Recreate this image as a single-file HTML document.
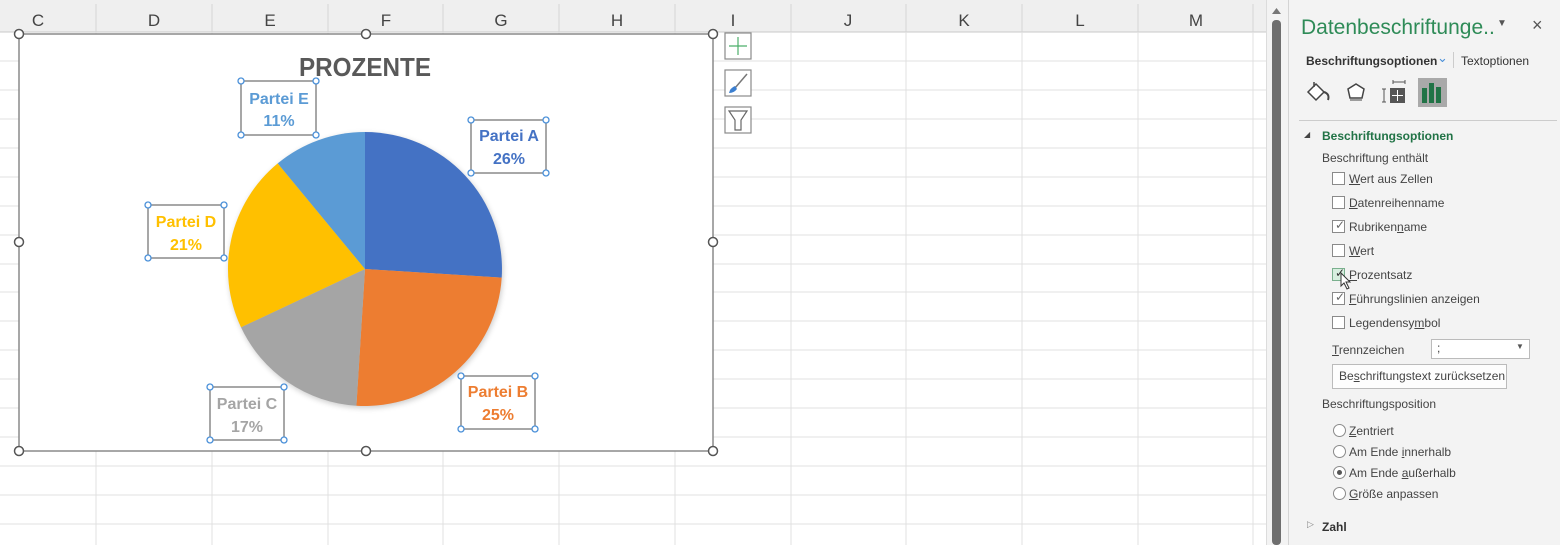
<!DOCTYPE html>
<html><head><meta charset="utf-8"><style>
body{margin:0;width:1560px;height:545px;overflow:hidden;background:#fff;font-family:"Liberation Sans",sans-serif;position:relative}
.panel{position:absolute;left:1288px;top:0;width:272px;height:545px;background:#f3f3f3;border-left:1px solid #d4d4d4;color:#444;font-size:12px}
.panel .t{position:absolute;white-space:nowrap}
.cb{position:absolute;width:11px;height:11px;border:1px solid #8a8a8a;background:#fff}
.rb{position:absolute;width:11px;height:11px;border:1px solid #8a8a8a;border-radius:50%;background:#fff}
</style></head><body>
<svg width="1288" height="545" style="position:absolute;left:0;top:0" font-family="Liberation Sans, sans-serif">
<rect x="0" y="0" width="1266" height="32" fill="#efefef"/>
<line x1="0" y1="32" x2="1266" y2="32" stroke="#c8c8c8"/>
<g stroke="#d4d4d4">
<line x1="96" y1="4" x2="96" y2="32"/><line x1="212" y1="4" x2="212" y2="32"/><line x1="328" y1="4" x2="328" y2="32"/><line x1="443" y1="4" x2="443" y2="32"/><line x1="559" y1="4" x2="559" y2="32"/><line x1="675" y1="4" x2="675" y2="32"/><line x1="791" y1="4" x2="791" y2="32"/><line x1="906" y1="4" x2="906" y2="32"/><line x1="1022" y1="4" x2="1022" y2="32"/><line x1="1138" y1="4" x2="1138" y2="32"/><line x1="1253" y1="4" x2="1253" y2="32"/>
</g>
<g stroke="#e1e1e1">
<line x1="96" y1="32" x2="96" y2="545"/><line x1="212" y1="32" x2="212" y2="545"/><line x1="328" y1="32" x2="328" y2="545"/><line x1="443" y1="32" x2="443" y2="545"/><line x1="559" y1="32" x2="559" y2="545"/><line x1="675" y1="32" x2="675" y2="545"/><line x1="791" y1="32" x2="791" y2="545"/><line x1="906" y1="32" x2="906" y2="545"/><line x1="1022" y1="32" x2="1022" y2="545"/><line x1="1138" y1="32" x2="1138" y2="545"/><line x1="1253" y1="32" x2="1253" y2="545"/>
<line x1="0" y1="61" x2="1266" y2="61"/><line x1="0" y1="90" x2="1266" y2="90"/><line x1="0" y1="119" x2="1266" y2="119"/><line x1="0" y1="148" x2="1266" y2="148"/><line x1="0" y1="177" x2="1266" y2="177"/><line x1="0" y1="206" x2="1266" y2="206"/><line x1="0" y1="235" x2="1266" y2="235"/><line x1="0" y1="264" x2="1266" y2="264"/><line x1="0" y1="292" x2="1266" y2="292"/><line x1="0" y1="321" x2="1266" y2="321"/><line x1="0" y1="350" x2="1266" y2="350"/><line x1="0" y1="379" x2="1266" y2="379"/><line x1="0" y1="408" x2="1266" y2="408"/><line x1="0" y1="437" x2="1266" y2="437"/><line x1="0" y1="466" x2="1266" y2="466"/><line x1="0" y1="495" x2="1266" y2="495"/><line x1="0" y1="524" x2="1266" y2="524"/>
</g>
<g font-size="17" fill="#444" text-anchor="middle">
<text x="38" y="26">C</text><text x="154" y="26">D</text><text x="270" y="26">E</text><text x="386" y="26">F</text><text x="501" y="26">G</text><text x="617" y="26">H</text><text x="733" y="26">I</text><text x="848" y="26">J</text><text x="964" y="26">K</text><text x="1080" y="26">L</text><text x="1196" y="26">M</text>
</g>
<rect x="1266" y="0" width="22" height="545" fill="#f3f3f3"/>
<line x1="1266.5" y1="0" x2="1266.5" y2="545" stroke="#dcdcdc"/>
<rect x="1272" y="20" width="9" height="525" rx="4" fill="#6e6e6e"/>
<path d="M1272 14 L1276.5 8 L1281 14Z" fill="#777"/>
<rect x="19" y="34" width="694" height="417" fill="#fff" stroke="#8a8a8a" stroke-width="1.5"/>
<text x="365" y="76" font-size="26" font-weight="bold" fill="#595959" text-anchor="middle" textLength="132" lengthAdjust="spacingAndGlyphs">PROZENTE</text>
<defs><filter id="sh" x="-20%" y="-20%" width="140%" height="140%"><feGaussianBlur stdDeviation="3"/></filter></defs>
<circle cx="366" cy="271" r="137" fill="#000" opacity="0.2" filter="url(#sh)"/>
<path d="M365 269 L365 132 A137 137 0 0 1 501.7 277.6Z" fill="#4472c4"/>
<path d="M365 269 L501.7 277.6 A137 137 0 0 1 356.4 405.7Z" fill="#ed7d31"/>
<path d="M365 269 L356.4 405.7 A137 137 0 0 1 241 327.3Z" fill="#a5a5a5"/>
<path d="M365 269 L241 327.3 A137 137 0 0 1 277.7 163.4Z" fill="#ffc000"/>
<path d="M365 269 L277.7 163.4 A137 137 0 0 1 365 132Z" fill="#5b9bd5"/>
<g fill="#fff" stroke="#8a8a8a" stroke-width="1.5">
<rect x="241" y="81" width="75" height="54"/><rect x="471" y="120" width="75" height="53"/><rect x="148" y="205" width="76" height="53"/><rect x="461" y="376" width="74" height="53"/><rect x="210" y="387" width="74" height="53"/>
</g>
<g fill="#fff" stroke="#4a90d9" stroke-width="1.3">
<circle cx="241" cy="81" r="3"/><circle cx="316" cy="81" r="3"/><circle cx="241" cy="135" r="3"/><circle cx="316" cy="135" r="3"/>
<circle cx="471" cy="120" r="3"/><circle cx="546" cy="120" r="3"/><circle cx="471" cy="173" r="3"/><circle cx="546" cy="173" r="3"/>
<circle cx="148" cy="205" r="3"/><circle cx="224" cy="205" r="3"/><circle cx="148" cy="258" r="3"/><circle cx="224" cy="258" r="3"/>
<circle cx="461" cy="376" r="3"/><circle cx="535" cy="376" r="3"/><circle cx="461" cy="429" r="3"/><circle cx="535" cy="429" r="3"/>
<circle cx="210" cy="387" r="3"/><circle cx="284" cy="387" r="3"/><circle cx="210" cy="440" r="3"/><circle cx="284" cy="440" r="3"/>
</g>
<g font-size="16" font-weight="bold" text-anchor="middle">
<text x="279" y="104" fill="#5b9bd5">Partei E</text><text x="279" y="126" fill="#5b9bd5">11%</text>
<text x="509" y="141" fill="#4472c4">Partei A</text><text x="509" y="164" fill="#4472c4">26%</text>
<text x="186" y="227" fill="#ffc000">Partei D</text><text x="186" y="250" fill="#ffc000">21%</text>
<text x="498" y="397" fill="#ed7d31">Partei B</text><text x="498" y="420" fill="#ed7d31">25%</text>
<text x="247" y="409" fill="#a5a5a5">Partei C</text><text x="247" y="432" fill="#a5a5a5">17%</text>
</g>
<g fill="#fff" stroke="#555" stroke-width="1.5">
<circle cx="19" cy="34" r="4.5"/><circle cx="366" cy="34" r="4.5"/><circle cx="713" cy="34" r="4.5"/><circle cx="19" cy="242" r="4.5"/><circle cx="713" cy="242" r="4.5"/><circle cx="19" cy="451" r="4.5"/><circle cx="366" cy="451" r="4.5"/><circle cx="713" cy="451" r="4.5"/>
</g>
<g fill="#fff" stroke="#8a8a8a" stroke-width="1.2">
<rect x="725" y="33" width="26" height="26"/><rect x="725" y="70" width="26" height="26"/><rect x="725" y="107" width="26" height="26"/>
</g>
<path d="M738 37 V55 M729 46 H747" stroke="#4caf6a" stroke-width="1.2"/>
<path d="M747 74 L735 88" stroke="#777" stroke-width="1.5"/>
<path d="M735 86 Q730 88 729 93 Q734 93 737 89Z" fill="#3b7fd0"/>
<path d="M729 111 H747 L741 120 V130 H735 V120Z" fill="none" stroke="#666" stroke-width="1.2"/>
</svg>
<div class="panel">
<div class="t" style="left:12px;top:16px;font-size:21px;color:#2e8b57">Datenbeschriftunge..</div>
<div class="t" style="left:208px;top:18px;font-size:10px;color:#555">▼</div>
<div class="t" style="left:243px;top:15px;font-size:18px;color:#555">×</div>
<div class="t" style="left:17px;top:54px;font-weight:bold;font-size:12px;color:#333">Beschriftungsoptionen</div>
<div class="t" style="left:148px;top:50px;font-size:13px;color:#4a90d9">⌄</div>
<div style="position:absolute;left:164px;top:52px;width:1px;height:16px;background:#ccc"></div>
<div class="t" style="left:172px;top:54px;color:#333">Textoptionen</div>
<svg style="position:absolute;left:15px;top:78px" width="150" height="32">
<path d="M4 14 L12 6 L20 14 L12 22Z" fill="#fff" stroke="#444" stroke-width="1.5"/><path d="M10 4 V9" stroke="#444" stroke-width="1.5"/><path d="M20 14 Q26 16 24 22" stroke="#444" stroke-width="2" fill="none"/>
<path d="M52 6 L60 11 L58 20 L46 20 L44 11Z" fill="#fff" stroke="#444" stroke-width="1.5"/><path d="M46 22 H58" stroke="#444"/>
<path d="M89 4 H101 M89 2 V6 M101 2 V6 M80 11 V24 M78 11 H82 M78 24 H82" stroke="#555"/><rect x="86" y="10" width="15" height="15" fill="#555"/><path d="M93.5 12 V23 M88 17.5 H99" stroke="#fff"/>
<rect x="114" y="0" width="29" height="29" fill="#a9a9a9"/><rect x="118" y="10" width="5" height="15" fill="#217346"/><rect x="125" y="5" width="5" height="20" fill="#217346"/><rect x="132" y="9" width="5" height="16" fill="#217346"/>
</svg>
<div style="position:absolute;left:10px;top:120px;width:258px;height:1px;background:#ccc"></div>
<div class="t" style="left:15px;top:130px;font-size:8px;color:#444">◢</div>
<div class="t" style="left:33px;top:129px;font-weight:bold;color:#217346">Beschriftungsoptionen</div>
<div class="t" style="left:33px;top:151px">Beschriftung enthält</div>
<div class="cb" style="left:43px;top:172px"></div><div class="t" style="left:60px;top:172px"><u>W</u>ert aus Zellen</div>
<div class="cb" style="left:43px;top:196px"></div><div class="t" style="left:60px;top:196px"><u>D</u>atenreihenname</div>
<div class="cb" style="left:43px;top:220px"></div><div class="t" style="left:46px;top:218px;color:#666">✓</div><div class="t" style="left:60px;top:220px">Rubriken<u>n</u>ame</div>
<div class="cb" style="left:43px;top:244px"></div><div class="t" style="left:60px;top:244px"><u>W</u>ert</div>
<div class="cb" style="left:43px;top:268px;background:#d7eedf;border-color:#7ab08e"></div><div class="t" style="left:46px;top:266px;color:#333">✓</div><div class="t" style="left:60px;top:268px"><u>P</u>rozentsatz</div>
<svg style="position:absolute;left:51px;top:272px" width="12" height="18"><path d="M1 1 V14 L4 11 L7 17 L9 16 L6 10 L10 10Z" fill="#fff" stroke="#333"/></svg>
<div class="cb" style="left:43px;top:292px"></div><div class="t" style="left:46px;top:290px;color:#666">✓</div><div class="t" style="left:60px;top:292px"><u>F</u>ührungslinien anzeigen</div>
<div class="cb" style="left:43px;top:316px"></div><div class="t" style="left:60px;top:316px">Legendensy<u>m</u>bol</div>
<div class="t" style="left:43px;top:343px"><u>T</u>rennzeichen</div>
<div style="position:absolute;left:142px;top:339px;width:97px;height:18px;background:#fff;border:1px solid #bbb"></div>
<div class="t" style="left:148px;top:341px">;</div><div class="t" style="left:227px;top:342px;font-size:8px;color:#555">▼</div>
<div style="position:absolute;left:43px;top:364px;width:173px;height:23px;background:#fdfdfd;border:1px solid #bbb"></div>
<div class="t" style="left:50px;top:369px">Be<u>s</u>chriftungstext zurücksetzen</div>
<div class="t" style="left:33px;top:397px">Beschriftungsposition</div>
<div class="rb" style="left:44px;top:424px"></div><div class="t" style="left:60px;top:424px"><u>Z</u>entriert</div>
<div class="rb" style="left:44px;top:445px"></div><div class="t" style="left:60px;top:445px">Am Ende <u>i</u>nnerhalb</div>
<div class="rb" style="left:44px;top:466px"></div><div style="position:absolute;left:48px;top:470px;width:5px;height:5px;border-radius:50%;background:#555"></div><div class="t" style="left:60px;top:466px">Am Ende <u>a</u>ußerhalb</div>
<div class="rb" style="left:44px;top:487px"></div><div class="t" style="left:60px;top:487px"><u>G</u>röße anpassen</div>
<div class="t" style="left:18px;top:519px;font-size:9px;color:#888">▷</div>
<div class="t" style="left:33px;top:520px;font-weight:bold;color:#333">Zahl</div>
</div>
</body></html>
